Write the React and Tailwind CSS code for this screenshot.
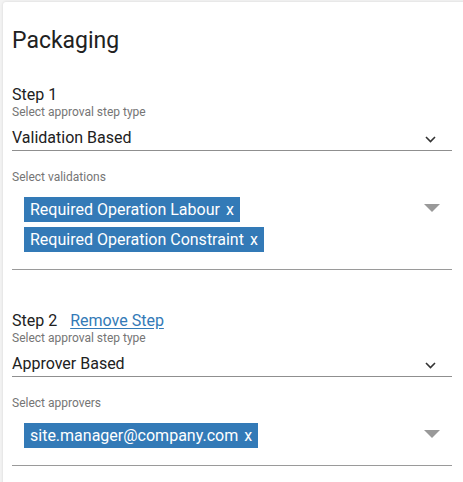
import React from "react";

function Chevron() {
  return (
    <svg width="11" height="7" viewBox="0 0 11 7" className="mr-[16px] mt-[3px]">
      <polyline points="1,1 5.5,5.5 10,1" fill="none" stroke="#333" strokeWidth="1.6" />
    </svg>
  );
}

function Caret() {
  return (
    <svg width="16" height="8" viewBox="0 0 16 8" className="mr-[12px] mt-[7px] shrink-0">
      <polygon points="0,0 16,0 8,8" fill="#999" />
    </svg>
  );
}

function Chip({ children }) {
  return (
    <div className="inline-flex h-[25px] items-center bg-[#337ab7] px-[6px] text-[16px] leading-[25px] text-white self-start">
      <span>{children}</span>
      <span className="ml-[6px]">x</span>
    </div>
  );
}

function Step({ num, removable, type, label, chips }) {
  return (
    <div>
      <div className="flex items-baseline text-[16px] leading-[20px] text-[#212121]">
        <span>Step {num}</span>
        {removable && (
          <a className="ml-[13px] text-[#337ab7] underline underline-offset-2">Remove Step</a>
        )}
      </div>
      <div className="text-[12px] leading-[14px] text-[#757575]">Select approval step type</div>
      <div className="flex items-center justify-between border-b border-[#8f8f8f] pt-[9px] pb-[2px] text-[16px] leading-[20px] text-[#212121]">
        <span>{type}</span>
        <Chevron />
      </div>
      <div className="mt-[19px] text-[12px] leading-[14px] text-[#757575]">{label}</div>
      <div className="mt-[13px] flex items-start justify-between border-b border-[#9a9a9a] pb-[17px]">
        <div className="ml-[12px] flex flex-col gap-[5px]">
          {chips.map((c) => (
            <Chip key={c}>{c}</Chip>
          ))}
        </div>
        <Caret />
      </div>
    </div>
  );
}

export default function App() {
  return (
    <div
      className="h-[482px] w-[463px] overflow-hidden bg-[#f3f3f3] pl-[3px] pt-[2px]"
      style={{ fontFamily: "Roboto, 'Noto Sans', sans-serif" }}
    >
      <div className="h-[520px] w-[480px] rounded-[3px] bg-white pl-[9px] pt-[25px] shadow-[0_0_3px_rgba(0,0,0,0.12)]">
        <div className="w-[440px]">
          <h1 className="text-[23px] leading-[28px] text-[#212121]">Packaging</h1>
          <div className="mt-[30px]">
            <Step
              num={1}
              type="Validation Based"
              label="Select validations"
              chips={["Required Operation Labour", "Required Operation Constraint"]}
            />
          </div>
          <div className="mt-[41px]">
            <Step
              num={2}
              removable
              type="Approver Based"
              label="Select approvers"
              chips={["site.manager@company.com"]}
            />
          </div>
        </div>
      </div>
    </div>
  );
}
